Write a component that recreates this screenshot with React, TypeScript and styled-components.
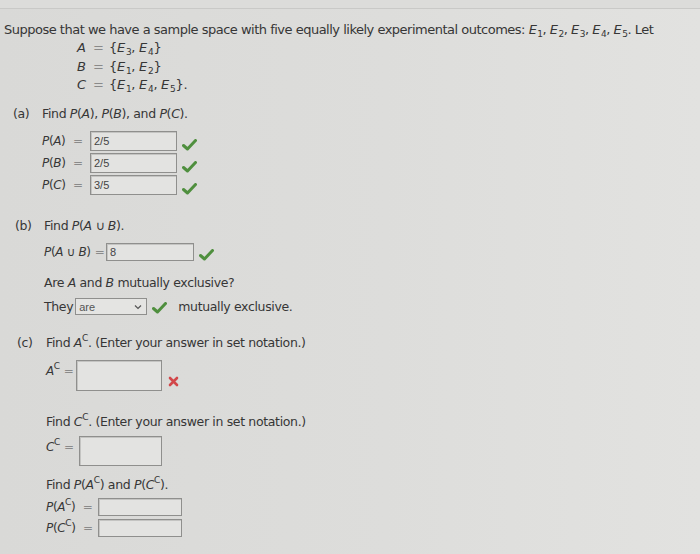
import React from "react";
import styled, { createGlobalStyle } from "styled-components";

const GlobalStyle = createGlobalStyle`
  html, body {
    margin: 0;
    padding: 0;
    background: #dcdcda;
  }
  body {
    font-family: "DejaVu Sans", Verdana, sans-serif;
    color: #363636;
  }
`;

const Page = styled.div`
  width: 700px;
  height: 554px;
  box-sizing: border-box;
  overflow: hidden;
  background: linear-gradient(90deg, #d9d9d7 0%, #dddddb 55%, #e2e2e0 100%);
  border-top: 1px solid #c9c9c7;
  margin-top: 8px;
  padding: 12px 0 0 4px;
`;

const Intro = styled.div`
  font-size: 13px;
  line-height: 18px;
  letter-spacing: -0.5px;
  white-space: nowrap;
`;

const Sets = styled.div`
  margin: 0 0 0 73px;
  font-size: 13px;
  line-height: 18.5px;
  letter-spacing: -0.3px;
`;

const SetRow = styled.div`
  display: grid;
  grid-template-columns: 12px 20px auto;
  justify-content: start;
  align-items: baseline;
`;

const I = styled.i`
  font-style: italic;
`;

const Sub = styled.sub`
  font-size: 9px;
  vertical-align: -3px;
  line-height: 0;
  margin-left: 1px;
`;

const Sup = styled.sup`
  font-size: 9px;
  vertical-align: 6px;
  line-height: 0;
  font-style: normal;
`;

const Part = styled.section<{ $top: number; $left: number }>`
  display: grid;
  grid-template-columns: 29px auto;
  justify-content: start;
  margin: ${(p) => p.$top}px 0 0 ${(p) => p.$left}px;
  font-size: 12.5px;
  letter-spacing: -0.35px;
  line-height: 18px;
`;

const PartLabel = styled.div``;

const PartBody = styled.div`
  display: flex;
  flex-direction: column;
  align-items: flex-start;
`;

const Line = styled.div<{ $top?: number }>`
  margin-top: ${(p) => p.$top ?? 0}px;
  white-space: nowrap;
`;

const AnswerRow = styled.div<{ $top?: number }>`
  display: flex;
  align-items: center;
  margin-top: ${(p) => p.$top ?? 0}px;
`;

const Label = styled.div<{ $w: number; $alignTop?: boolean }>`
  width: ${(p) => p.$w}px;
  flex: none;
  white-space: nowrap;
  align-self: ${(p) => (p.$alignTop ? "flex-start" : "center")};
  margin-top: ${(p) => (p.$alignTop ? 2 : 0)}px;
  font-size: 12px;
`;

const Eq = styled.span`
  color: #8a8a8a;
  margin-left: 4px;
`;

const Input = styled.div<{ $w: number; $h: number }>`
  width: ${(p) => p.$w}px;
  height: ${(p) => p.$h}px;
  flex: none;
  box-sizing: border-box;
  border: 1px solid #8f8f8d;
  background: #e3e3e1;
  box-shadow: inset 1px 1px 0 #c4c4c2;
  font-family: "Liberation Sans", Arial, sans-serif;
  font-size: 11px;
  letter-spacing: 0;
  color: #444;
  padding: 0 3px;
  display: flex;
  align-items: center;
`;

const Mark = styled.span<{ $dy?: number; $dx?: number }>`
  display: inline-flex;
  margin-left: ${(p) => p.$dx ?? 5}px;
  transform: translateY(${(p) => p.$dy ?? 0}px);
`;

const Select = styled.div`
  width: 72px;
  height: 17px;
  box-sizing: border-box;
  border: 1px solid #8f8f8d;
  background: #e4e4e2;
  display: flex;
  align-items: center;
  justify-content: space-between;
  padding: 0 4px 0 3px;
  font-family: "Liberation Sans", Arial, sans-serif;
  font-size: 11px;
  letter-spacing: 0;
  color: #555;
`;

const InlineRow = styled.div`
  display: flex;
  align-items: center;
  margin-top: 6px;
  white-space: nowrap;
`;

const They = styled.span`
  margin-right: 2px;
`;

const After = styled.span`
  margin-left: 11px;
`;

const Check = ({ dy, dx }: { dy?: number; dx?: number }) => (
  <Mark $dy={dy} $dx={dx}>
    <svg width="15" height="12" viewBox="0 0 15 12">
      <path
        d="M1.5 6.5 L5.5 10 L13.5 1.5"
        fill="none"
        stroke="#4f8f3e"
        strokeWidth="3"
        strokeLinecap="round"
        strokeLinejoin="round"
      />
    </svg>
  </Mark>
);

const Cross = ({ dy, dx }: { dy?: number; dx?: number }) => (
  <Mark $dy={dy} $dx={dx}>
    <svg width="11" height="11" viewBox="0 0 11 11">
      <path
        d="M2 2 L9 9 M9 2 L2 9"
        fill="none"
        stroke="#d2474a"
        strokeWidth="2.6"
        strokeLinecap="round"
      />
    </svg>
  </Mark>
);

const Chevron = () => (
  <svg width="8" height="6" viewBox="0 0 8 6">
    <path d="M1 1.5 L4 4.5 L7 1.5" fill="none" stroke="#555" strokeWidth="1.2" />
  </svg>
);

const E = ({ n }: { n: number }) => (
  <>
    <I>E</I>
    <Sub>{n}</Sub>
  </>
);

const Comp = ({ s }: { s: string }) => (
  <>
    <I>{s}</I>
    <Sup>C</Sup>
  </>
);

export default function App() {
  return (
    <>
      <GlobalStyle />
      <Page>
        <Intro>
          Suppose that we have a sample space with five equally likely experimental outcomes:{" "}
          <E n={1} />, <E n={2} />, <E n={3} />, <E n={4} />, <E n={5} />. Let
        </Intro>

        <Sets>
          <SetRow>
            <I>A</I>
            <Eq>=</Eq>
            <span>
              {"{"}
              <E n={3} />, <E n={4} />
              {"}"}
            </span>
          </SetRow>
          <SetRow>
            <I>B</I>
            <Eq>=</Eq>
            <span>
              {"{"}
              <E n={1} />, <E n={2} />
              {"}"}
            </span>
          </SetRow>
          <SetRow>
            <I>C</I>
            <Eq>=</Eq>
            <span>
              {"{"}
              <E n={1} />, <E n={4} />, <E n={5} />
              {"}"}.
            </span>
          </SetRow>
        </Sets>

        <Part $top={10} $left={9}>
          <PartLabel>(a)</PartLabel>
          <PartBody>
            <Line>
              Find <I>P</I>(<I>A</I>), <I>P</I>(<I>B</I>), and <I>P</I>(<I>C</I>).
            </Line>
            <AnswerRow $top={8}>
              <Label $w={48}>
                <I>P</I>(<I>A</I>) <Eq>=</Eq>
              </Label>
              <Input $w={87} $h={20}>2/5</Input>
              <Check dy={4} />
            </AnswerRow>
            <AnswerRow $top={2}>
              <Label $w={48}>
                <I>P</I>(<I>B</I>) <Eq>=</Eq>
              </Label>
              <Input $w={87} $h={20}>2/5</Input>
              <Check dy={4} />
            </AnswerRow>
            <AnswerRow $top={2}>
              <Label $w={48}>
                <I>P</I>(<I>C</I>) <Eq>=</Eq>
              </Label>
              <Input $w={87} $h={20}>3/5</Input>
              <Check dy={4} />
            </AnswerRow>
          </PartBody>
        </Part>

        <Part $top={22} $left={11}>
          <PartLabel>(b)</PartLabel>
          <PartBody>
            <Line>
              Find <I>P</I>(<I>A</I> ∪ <I>B</I>).
            </Line>
            <AnswerRow $top={8}>
              <Label $w={62}>
                <I>P</I>(<I>A</I> ∪ <I>B</I>)<Eq>=</Eq>
              </Label>
              <Input $w={88} $h={18}>8</Input>
              <Check dy={3} />
            </AnswerRow>
            <Line $top={13}>
              Are <I>A</I> and <I>B</I> mutually exclusive?
            </Line>
            <InlineRow>
              <They>They</They>
              <Select>
                are
                <Chevron />
              </Select>
              <Check dy={1} />
              <After>mutually exclusive.</After>
            </InlineRow>
          </PartBody>
        </Part>

        <Part $top={18} $left={13}>
          <PartLabel>(c)</PartLabel>
          <PartBody>
            <Line>
              Find <Comp s="A" />. (Enter your answer in set notation.)
            </Line>
            <AnswerRow $top={8}>
              <Label $w={30} $alignTop>
                <Comp s="A" />
                <Eq>=</Eq>
              </Label>
              <Input $w={86} $h={31} />
              <Cross dy={6} dx={6} />
            </AnswerRow>
            <Line $top={22}>
              Find <Comp s="C" />. (Enter your answer in set notation.)
            </Line>
            <AnswerRow $top={5}>
              <Label $w={33} $alignTop>
                <Comp s="C" />
                <Eq>=</Eq>
              </Label>
              <Input $w={83} $h={30} />
            </AnswerRow>
            <Line $top={10}>
              Find <I>P</I>(<Comp s="A" />) and <I>P</I>(<Comp s="C" />).
            </Line>
            <AnswerRow $top={4}>
              <Label $w={52}>
                <I>P</I>(<Comp s="A" />) <Eq>=</Eq>
              </Label>
              <Input $w={84} $h={18} />
            </AnswerRow>
            <AnswerRow $top={3}>
              <Label $w={52}>
                <I>P</I>(<Comp s="C" />) <Eq>=</Eq>
              </Label>
              <Input $w={84} $h={18} />
            </AnswerRow>
          </PartBody>
        </Part>
      </Page>
    </>
  );
}
